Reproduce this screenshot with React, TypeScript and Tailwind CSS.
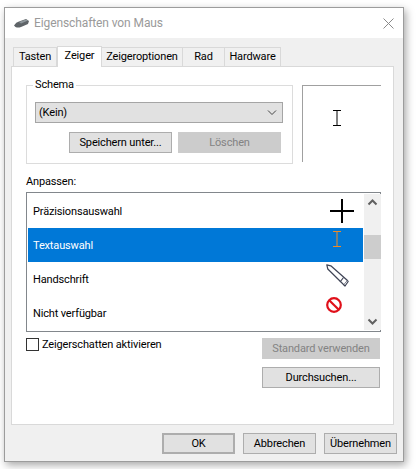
const rows = [
  { label: 'Präzisionsauswahl', icon: 'cross', place: 'mr-[9px]' },
  { label: 'Textauswahl', icon: 'beam', selected: true, place: 'mr-[22px] mb-[12px]' },
  { label: 'Handschrift', icon: 'pen', place: 'mr-[14px] mb-[8px]' },
  { label: 'Nicht verfügbar', icon: 'no', place: 'mr-[21px] mb-[16px]' },
]

const tabs = [
  { label: 'Tasten', width: 'w-[44px]' },
  { label: 'Zeiger', width: 'w-[45px]', active: true },
  { label: 'Zeigeroptionen', width: 'w-[82px] -ml-px' },
  { label: 'Rad', width: 'w-[43px] -ml-px' },
  { label: 'Hardware', width: 'w-[57px] -ml-px' },
]

function Beam({ color }: { color: string }) {
  return (
    <svg width="8" height="16" viewBox="0 0 8 16" fill="none" stroke={color} strokeWidth="1">
      <path d="M0 .5h8M0 15.500h8M4 .5v15" />
    </svg>
  )
}

function RowIcon({ icon }: { icon: string }) {
  if (icon === 'cross') {
    return (
      <svg width="24" height="24" viewBox="0 0 24 24" stroke="#000" strokeWidth="2">
        <path d="M0 12h24M12 0v24" />
      </svg>
    )
  }
  if (icon === 'beam') return <Beam color="#f08a24" />
  if (icon === 'pen') {
    return (
      <svg width="23" height="23" viewBox="0 0 23 23" fill="#fff" stroke="#3f4456" strokeWidth="1.200" strokeLinejoin="round">
        <path d="M.8.800l4 1L21.500 16.500 18 21 1.800 5z" />
        <path d="M17.500 13.500L14 18M18 21l1 1 3.200-4.500-.7-1" />
      </svg>
    )
  }
  return (
    <svg width="16" height="16" viewBox="0 0 16 16" fill="none" stroke="#e0101a" strokeWidth="2.200">
      <circle cx="8" cy="8" r="6.800" />
      <path d="M3.200 3.200l9.600 9.600" />
    </svg>
  )
}

function Btn({ children, className = '', disabled = false }: { children: React.ReactNode; className?: string; disabled?: boolean }) {
  return (
    <div
      className={`flex items-center justify-center border ${
        disabled ? 'bg-[#cccccc] border-[#cccccc] text-[#838383]' : 'bg-[#e1e1e1] border-[#adadad] text-black'
      } ${className}`}
    >
      {children}
    </div>
  )
}

export default function App() {
  return (
    <div className="w-[420px] h-[469px] bg-white pt-[7px] pl-[4px] text-[11px] tracking-[-0.15px] leading-[16px] text-black overflow-hidden font-['Roboto',sans-serif]">
      <div className="w-[400px] h-[455px] border border-[#9c9c9c] bg-[#f0f0f0] shadow-[2px_3px_8px_rgba(0,0,0,0.35)]">
        {/* Title bar */}
        <div className="h-[30px] bg-white flex items-center pl-[9px] pr-[9px]">
          <svg width="15" height="9" viewBox="0 0 15 9" className="mr-[5px]">
            <path d="M0 6.500Q2 3 5 2.500L12 0l3 2-1 3-7 3Q4 9 1.500 8z" fill="#5f6468" />
            <path d="M5 3l7-2.500 2 1-7 3z" fill="#8e979c" />
          </svg>
          <span className="text-[#9a9a9a] text-[12px] tracking-[-0.1px]">Eigenschaften von Maus</span>
          <svg width="11" height="11" viewBox="0 0 11 11" className="ml-auto" stroke="#8a8a8a" strokeWidth="1" fill="none">
            <path d="M.5.500l10 10M10.500.500l-10 10" />
          </svg>
        </div>

        {/* Tabs */}
        <div className="pl-[8px] pt-[7px] flex items-end h-[28px]">
          {tabs.map(tab => (
            <div
              key={tab.label}
              className={`${tab.width} flex items-center justify-center border border-[#d9d9d9] ${
                tab.active ? 'h-[21px] bg-white border-b-0 -mb-px z-10 pb-[2px]' : 'h-[19px] bg-[#f0f0f0] border-b-0'
              }`}
            >
              {tab.label}
            </div>
          ))}
        </div>

        {/* Panel */}
        <div className="ml-[6px] w-[383px] h-[359px] border border-[#d9d9d9] bg-white pl-[14px] pt-[10px]">
          <div className="flex items-start">
            <fieldset className="w-[267px] h-[87px] border border-[#dcdcdc] pl-[8px]">
              <legend className="-ml-[2px] px-[2px]">Schema</legend>
              <div className="w-[248px] h-[21px] mt-[9px] bg-[#e1e1e1] border border-[#a5a5a5] flex items-center justify-between pl-[3px] pr-[5px]">
                <span>(Kein)</span>
                <svg width="10" height="6" viewBox="0 0 10 6" fill="none" stroke="#444" strokeWidth="1">
                  <path d="M1 .5l4 4 4-4" />
                </svg>
              </div>
              <div className="flex gap-[6px] mt-[9px] ml-[34px]">
                <Btn className="w-[103px] h-[21px]">Speichern unter...</Btn>
                <Btn className="w-[103px] h-[21px]" disabled>Löschen</Btn>
              </div>
            </fieldset>
            <div className="w-[79px] h-[77px] ml-[9px] mt-[8px] border-t border-l border-[#a0a0a0] pl-[30px] pt-[24px]">
              <Beam color="#000" />
            </div>
          </div>

          <div className="mt-[10px] h-[16px] leading-[15px]">Anpassen:</div>
          <div className="mt-[2px] w-[355px] h-[140px] border border-[#82878c] p-[1px] flex">
            <div className="w-[335px] shrink-0">
              {rows.map(row => (
                <div
                  key={row.label}
                  className={`h-[34px] flex items-center pl-[5px] ${row.selected ? 'bg-[#0078d7] text-white' : ''}`}
                >
                  <span className="pt-[2px]">{row.label}</span>
                  <div className={`ml-auto ${row.place}`}>
                    <RowIcon icon={row.icon} />
                  </div>
                </div>
              ))}
            </div>
            <div className="ml-[1px] w-[17px] bg-[#f0f0f0] flex flex-col">
              <svg width="17" height="17" viewBox="0 0 17 17" fill="none" stroke="#606060" strokeWidth="2">
                <path d="M4.500 10.500l4-4 4 4" />
              </svg>
              <div className="w-[17px] h-[24px] mt-[24px] bg-[#cdcdcd]" />
              <div className="flex-1" />
              <svg width="17" height="17" viewBox="0 0 17 17" fill="none" stroke="#606060" strokeWidth="2">
                <path d="M4.500 6.500l4 4 4-4" />
              </svg>
            </div>
          </div>

          <div className="mt-[6px] w-[355px] flex justify-between items-start">
            <div className="flex items-center gap-[3px] leading-[13px]">
              <div className="w-[13px] h-[13px] border border-[#333] bg-white" />
              <span>Zeigerschatten aktivieren</span>
            </div>
            <div className="flex flex-col gap-[8px] mr-px">
              <Btn className="w-[118px] h-[21px]" disabled>Standard verwenden</Btn>
              <Btn className="w-[118px] h-[21px]">Durchsuchen...</Btn>
            </div>
          </div>
        </div>

        {/* Footer buttons */}
        <div className="flex justify-end gap-[8px] pr-[6px] pt-[8px]">
          <Btn className="w-[73px] h-[21px] border-2 border-[#0078d7]">OK</Btn>
          <Btn className="w-[73px] h-[21px]">Abbrechen</Btn>
          <Btn className="w-[73px] h-[21px]">Übernehmen</Btn>
        </div>
      </div>
    </div>
  )
}
